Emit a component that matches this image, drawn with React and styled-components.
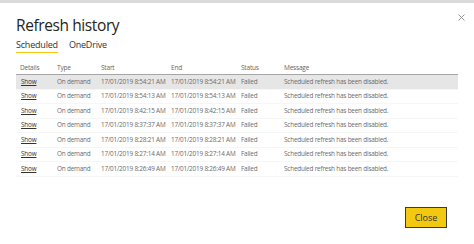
import React from "react";
import styled, { createGlobalStyle } from "styled-components";

const Global = createGlobalStyle`
  html, body { margin: 0; padding: 0; background: #fff; }
  body { width: 474px; height: 244px; overflow: hidden; font-family: "Open Sans", "Noto Sans", sans-serif; }
  * { box-sizing: border-box; }
`;

const Dialog = styled.div`
  position: relative;
  width: 474px;
  height: 244px;
  border-top: 3px solid #dadada;
  padding: 0 16px;
  display: flex;
  flex-direction: column;
`;

const CloseX = styled.button`
  position: absolute;
  top: 9px;
  right: 8px;
  width: 10px;
  height: 10px;
  padding: 0;
  border: 0;
  background: transparent;
  display: flex;
  align-items: center;
  justify-content: center;
`;

const Title = styled.h1`
  margin: 11px 0 0 0;
  font-size: 15.5px;
  line-height: 22px;
  font-weight: 400;
  color: #252423;
  letter-spacing: -0.4px;
`;

const Tabs = styled.div`
  display: flex;
  gap: 11px;
  margin-top: 3px;
`;

const Tab = styled.div`
  font-size: 9px;
  line-height: 12px;
  letter-spacing: -0.2px;
  color: #333;
  padding-bottom: 1px;
  border-bottom: 1px solid ${(p) => (p.$active ? "#f2c811" : "transparent")};
`;

const Table = styled.div`
  margin-top: 8px;
  width: 442px;
  display: flex;
  flex-direction: column;
`;

const cols = "37px 44px 70px 70px 43px 1fr";

const HeaderRow = styled.div`
  display: grid;
  grid-template-columns: ${cols};
  height: 14px;
  align-items: center;
  border-bottom: 1px solid #a6a6a6;
`;

const Row = styled.div`
  display: grid;
  grid-template-columns: ${cols};
  height: 14.5px;
  align-items: center;
  background: ${(p) => (p.$selected ? "#e6e6e6" : "transparent")};
  border-bottom: 1px solid #f6f6f6;
`;

const HeadCell = styled.div`
  font-size: 6.5px;
  line-height: 8px;
  letter-spacing: -0.2px;
  color: #666;
  padding-left: 4px;
  white-space: nowrap;
`;

const Cell = styled.div`
  font-size: 6.4px;
  line-height: 8px;
  letter-spacing: -0.2px;
  color: #6b6b6b;
  padding-left: 4px;
  white-space: nowrap;
`;

const ShowLink = styled.a`
  display: block;
  font-size: 6.4px;
  line-height: 8px;
  letter-spacing: -0.2px;
  color: #333;
  text-decoration: underline;
  padding-left: 5px;
`;

const Footer = styled.div`
  margin-top: auto;
  margin-bottom: 16px;
  display: flex;
  justify-content: flex-end;
  padding-right: 11px;
`;

const Button = styled.button`
  width: 42px;
  height: 21px;
  background: #f2c811;
  border: 1px solid #3a3a3a;
  color: #333;
  font-family: inherit;
  font-size: 9px;
  padding: 0;
`;

const rows = [
  "8:54:21 AM",
  "8:54:13 AM",
  "8:42:15 AM",
  "8:37:37 AM",
  "8:28:21 AM",
  "8:27:14 AM",
  "8:26:49 AM",
];

export default function App() {
  return (
    <>
      <Global />
      <Dialog>
        <CloseX aria-label="Close">
          <svg width="7" height="7" viewBox="0 0 7 7">
            <path d="M0.5 0.5 L6.5 6.5 M6.5 0.5 L0.5 6.5" stroke="#8a8a8a" strokeWidth="0.9" />
          </svg>
        </CloseX>
        <Title>Refresh history</Title>
        <Tabs>
          <Tab $active>Scheduled</Tab>
          <Tab>OneDrive</Tab>
        </Tabs>
        <Table>
          <HeaderRow>
            <HeadCell>Details</HeadCell>
            <HeadCell>Type</HeadCell>
            <HeadCell>Start</HeadCell>
            <HeadCell>End</HeadCell>
            <HeadCell>Status</HeadCell>
            <HeadCell>Message</HeadCell>
          </HeaderRow>
          {rows.map((t, i) => (
            <Row key={i} $selected={i === 0}>
              <ShowLink>Show</ShowLink>
              <Cell>On demand</Cell>
              <Cell>17/01/2019 {t}</Cell>
              <Cell>17/01/2019 {t}</Cell>
              <Cell>Failed</Cell>
              <Cell>Scheduled refresh has been disabled.</Cell>
            </Row>
          ))}
        </Table>
        <Footer>
          <Button>Close</Button>
        </Footer>
      </Dialog>
    </>
  );
}
